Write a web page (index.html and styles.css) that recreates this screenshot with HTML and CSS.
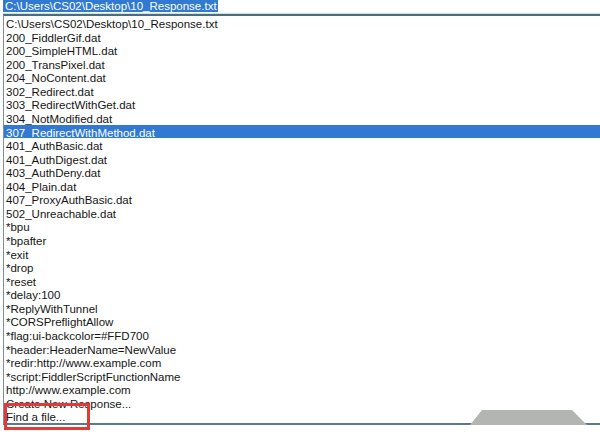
FILE: index.html
```html
<!DOCTYPE html>
<html>
<head>
<meta charset="utf-8">
<link rel="stylesheet" href="styles.css">
</head>
<body>
<div class="combo">
  <div class="input"><span class="sel">C:\Users\CS02\Desktop\10_Response.txt</span></div>
  <ul class="list">
    <li>C:\Users\CS02\Desktop\10_Response.txt</li>
    <li>200_FiddlerGif.dat</li>
    <li>200_SimpleHTML.dat</li>
    <li>200_TransPixel.dat</li>
    <li>204_NoContent.dat</li>
    <li>302_Redirect.dat</li>
    <li>303_RedirectWithGet.dat</li>
    <li>304_NotModified.dat</li>
    <li class="active">307_RedirectWithMethod.dat</li>
    <li>401_AuthBasic.dat</li>
    <li>401_AuthDigest.dat</li>
    <li>403_AuthDeny.dat</li>
    <li>404_Plain.dat</li>
    <li>407_ProxyAuthBasic.dat</li>
    <li>502_Unreachable.dat</li>
    <li>*bpu</li>
    <li>*bpafter</li>
    <li>*exit</li>
    <li>*drop</li>
    <li>*reset</li>
    <li>*delay:100</li>
    <li>*ReplyWithTunnel</li>
    <li>*CORSPreflightAllow</li>
    <li>*flag:ui-backcolor=#FFD700</li>
    <li>*header:HeaderName=NewValue</li>
    <li>*redir:http://www.example.com</li>
    <li>*script:FiddlerScriptFunctionName</li>
    <li>http://www.example.com</li>
    <li>Create New Response...</li>
    <li>Find a file...</li>
  </ul>
</div>
<div class="tab"></div>
<div class="annot"></div>
</body>
</html>
```

FILE: styles.css
```css
html, body {
  margin: 0;
  padding: 0;
  background: #ffffff;
}
body {
  width: 600px;
  height: 438px;
  overflow: hidden;
  position: relative;
  font-family: "Liberation Sans", Arial, sans-serif;
  font-size: 11.5px;
  color: #151515;
}
.combo {
  padding-left: 3px;
}
.input {
  height: 14px;
  line-height: 13px;
}
.sel {
  background: #3279d2;
  color: #ffffff;
  padding: 0 1px 0 2px;
}
.list {
  list-style: none;
  margin: 0;
  padding: 0;
  border-top: 2px solid #4d6b80;
  box-shadow: 0 -1px 0 #bfe4f4;
  border-left: 1px solid #7d8f9c;
  border-bottom: 2px solid #5b7a8e;
  height: 407px;
}
.list li {
  box-sizing: border-box;
  height: 13.57px;
  line-height: 13.57px;
  padding: 2px 0 0 2px;
  white-space: nowrap;
}
.list li.active {
  background: #3279d2;
  color: #ffffff;
}
.tab {
  position: absolute;
  left: 470px;
  top: 410px;
  width: 117px;
  height: 15px;
  background: #b2b5b1;
  clip-path: polygon(12px 0, 102px 0, 117px 100%, 0 100%);
}
.annot {
  position: absolute;
  left: 4px;
  top: 403px;
  width: 80px;
  height: 21px;
  border: 3px solid #e23a3a;
}
```
